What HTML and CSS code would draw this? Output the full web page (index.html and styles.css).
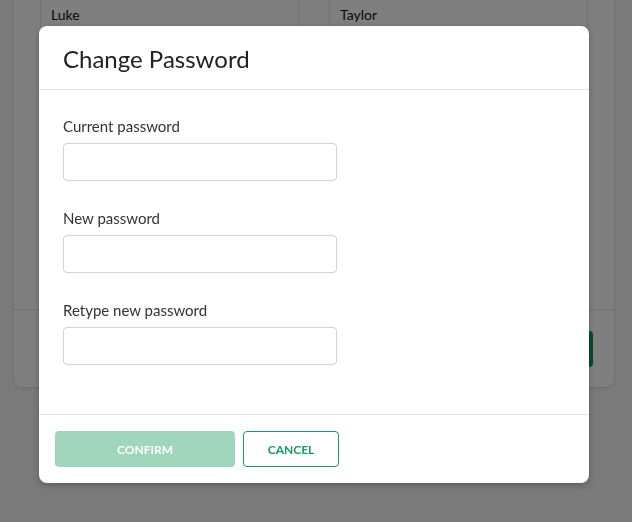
FILE: index.html
```html
<!DOCTYPE html>
<html>
<head>
<meta charset="utf-8">
<link rel="stylesheet" href="styles.css">
</head>
<body>
<div class="page">
  <div class="card">
    <div class="table">
      <div class="row">
        <div class="cell c1">Luke</div>
        <div class="cell c2"></div>
        <div class="cell c3">Taylor</div>
      </div>
      <div class="row fill">
        <div class="cell c1"></div>
        <div class="cell c2"></div>
        <div class="cell c3"></div>
      </div>
    </div>
    <div class="card-footer">
      <div class="bg-btn"></div>
    </div>
  </div>
</div>
<div class="overlay"></div>
<div class="modal">
  <div class="modal-header">
    <h2 class="title">Change Password</h2>
  </div>
  <div class="modal-body">
    <div class="field">
      <label class="label">Current password</label>
      <input class="input" type="password">
    </div>
    <div class="field">
      <label class="label">New password</label>
      <input class="input" type="password">
    </div>
    <div class="field">
      <label class="label">Retype new password</label>
      <input class="input" type="password">
    </div>
  </div>
  <div class="modal-footer">
    <button class="btn btn-confirm">CONFIRM</button>
    <button class="btn btn-cancel">CANCEL</button>
  </div>
</div>
</body>
</html>
```
FILE: styles.css
```css
* { box-sizing: border-box; }
html, body { margin: 0; padding: 0; }
body {
  width: 632px;
  height: 522px;
  overflow: hidden;
  background: #f4f4f4;
  font-family: Lato, "Open Sans", sans-serif;
  color: #222;
}
.page {
  padding: 0 18px 0 14px;
}
.card {
  margin-top: -20px;
  width: 600px;
  height: 407px;
  background: #ffffff;
  border-radius: 8px;
  display: flex;
  flex-direction: column;
  box-shadow: 0 1px 3px rgba(0,0,0,0.15);
}
.table {
  margin: 0 26px 0 26px;
  height: 329px;
  flex: none;
  display: flex;
  flex-direction: column;
  border-left: 1px solid #e2e2e6;
  border-right: 1px solid #e2e2e6;
}
.row { display: flex; }
.row.fill { flex: 1; }
.cell {
  border-right: 1px solid #e2e2e6;
  font-size: 14px;
  color: #111;
  padding: 25px 10px 0 10px;
  line-height: 20px;
}
.row.fill .cell { padding: 0; }
.cell:last-child { border-right: none; }
.c1 { width: 258px; }
.c2 { width: 31px; }
.c3 { flex: 1; }
.card-footer {
  border-top: 1px solid #e2e2e6;
  flex: 1;
  display: flex;
  justify-content: flex-end;
  padding: 21px 21px 0 0;
}
.bg-btn {
  width: 120px;
  height: 36px;
  background: #0f9a58;
  border-radius: 4px;
}
.overlay {
  position: fixed;
  inset: 0;
  background: rgba(0,0,0,0.5);
}
.modal {
  position: absolute;
  left: 39px;
  top: 26px;
  width: 550px;
  background: #ffffff;
  border-radius: 8px;
  box-shadow: 0 2px 6px rgba(0,0,0,0.25);
}
.modal-header {
  height: 64px;
  border-bottom: 1px solid #e2e2e8;
  padding: 0 24px;
  display: flex;
  align-items: center;
}
.title {
  margin: 0;
  font-size: 24px;
  font-weight: 400;
  color: #222;
  line-height: 28px;
  padding-top: 2px;
}
.modal-body {
  padding: 27px 24px 49px 24px;
  display: flex;
  flex-direction: column;
  gap: 28px;
}
.field {
  display: flex;
  flex-direction: column;
  gap: 7px;
}
.label {
  font-size: 15px;
  line-height: 19px;
  color: #333;
}
.input {
  width: 274px;
  height: 38px;
  border: 1px solid #d3d2dd;
  border-radius: 4px;
  background: #fff;
  outline: none;
}
.modal-footer {
  border-top: 1px solid #e2e2e8;
  padding: 16px 16px;
  display: flex;
  gap: 8px;
}
.btn {
  height: 36px;
  border-radius: 4px;
  font-family: Lato, "Open Sans", sans-serif;
  font-size: 12px;
  font-weight: 700;
  cursor: pointer;
}
.btn-confirm {
  width: 180px;
  background: #a0d6bc;
  border: none;
  color: #ffffff;
}
.btn-cancel {
  width: 96px;
  background: #ffffff;
  border: 1px solid #1a9a5c;
  color: #1a9a5c;
}
```
